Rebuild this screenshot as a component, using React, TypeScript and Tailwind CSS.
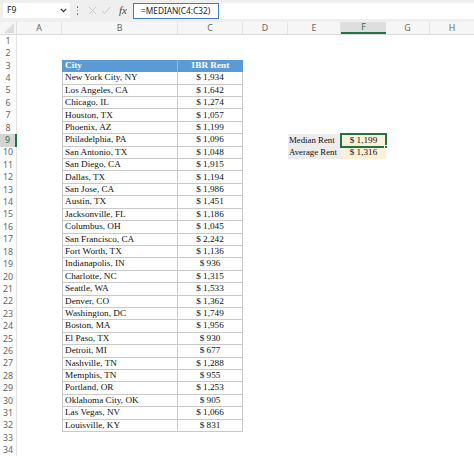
import React from "react";

const data: [string, string][] = [
  ["New York City, NY", "1,934"],
  ["Los Angeles, CA", "1,642"],
  ["Chicago, IL", "1,274"],
  ["Houston, TX", "1,057"],
  ["Phoenix, AZ", "1,199"],
  ["Philadelphia, PA", "1,096"],
  ["San Antonio, TX", "1,048"],
  ["San Diego, CA", "1,915"],
  ["Dallas, TX", "1,194"],
  ["San Jose, CA", "1,986"],
  ["Austin, TX", "1,451"],
  ["Jacksonville, FL", "1,186"],
  ["Columbus, OH", "1,045"],
  ["San Francisco, CA", "2,242"],
  ["Fort Worth, TX", "1,136"],
  ["Indianapolis, IN", "936"],
  ["Charlotte, NC", "1,315"],
  ["Seattle, WA", "1,533"],
  ["Denver, CO", "1,362"],
  ["Washington, DC", "1,749"],
  ["Boston, MA", "1,956"],
  ["El Paso, TX", "930"],
  ["Detroit, MI", "677"],
  ["Nashville, TN", "1,288"],
  ["Memphis, TN", "955"],
  ["Portland, OR", "1,253"],
  ["Oklahoma City, OK", "905"],
  ["Las Vegas, NV", "1,066"],
  ["Louisville, KY", "831"],
];

const serif = "font-['Liberation_Serif',serif]";

function Row({ n }: { n: number }) {
  const sel = n === 9;
  const inTable = n >= 3 && n <= 32;
  const head = n === 3;
  const item = n >= 4 && n <= 32 ? data[n - 4] : null;

  let bCls = "w-[116px] shrink-0 flex items-center pl-[2px]";
  let cCls = "w-[65px] shrink-0 flex items-center justify-center";
  if (head) {
    bCls += " bg-[#5b9bd5] border-l border-t border-b border-r border-[#5b9bd5] border-r-[#8fbbe4] text-white font-bold";
    cCls += " bg-[#5b9bd5] border-t border-b border-r border-[#5b9bd5] text-white font-bold";
  } else if (inTable) {
    bCls += " border-l border-b border-r border-[#c9c9c9] text-[#111]";
    cCls += " border-b border-r border-[#c9c9c9] text-[#111]";
  }

  return (
    <div className={`flex h-[12.42px] ${serif} text-[9.2px] leading-none`}>
      <div
        className={
          sel
            ? "w-[17px] shrink-0 flex items-center justify-center font-['Noto_Sans',sans-serif] text-[8.8px] bg-[#d4d4d4] text-[#217346] border-r-2 border-[#217346]"
            : "w-[17px] shrink-0 flex items-center justify-center font-['Noto_Sans',sans-serif] text-[8.8px] text-[#666] border-r border-[#e4e4e4]"
        }
      >
        {n}
      </div>
      <div className="w-[45px] shrink-0" />
      <div className={bCls}>{head ? "City" : item ? item[0] : ""}</div>
      <div className={cCls}>{head ? "1BR Rent" : item ? `$ ${item[1]}` : ""}</div>
      <div className="w-[45px] shrink-0" />
      {n === 9 || n === 10 ? (
        <div className="w-[53px] shrink-0 bg-[#ececec] flex items-center pl-[1px] text-[8.8px] text-[#111] whitespace-nowrap overflow-hidden">
          {n === 9 ? "Median Rent" : "Average Rent"}
        </div>
      ) : (
        <div className="w-[53px] shrink-0" />
      )}
      {n === 9 ? (
        <div className="w-[45px] shrink-0 bg-[#fdf0d4] flex items-center justify-center relative text-[#111]">
          $ 1,199
          <div className="absolute -inset-[1px] border-2 border-[#217346]" />
          <div className="absolute -right-[2px] -bottom-[2px] w-[4px] h-[4px] bg-[#217346] border border-white" />
        </div>
      ) : n === 10 ? (
        <div className="w-[45px] shrink-0 bg-[#fdf0d4] flex items-center justify-center text-[#111]">
          $ 1,316
        </div>
      ) : (
        <div className="w-[45px] shrink-0" />
      )}
      <div className="w-[44px] shrink-0" />
      <div className="flex-1" />
    </div>
  );
}

export default function App() {
  const rows = Array.from({ length: 34 }, (_, i) => i + 1);
  return (
    <div className="w-[474px] h-[456px] overflow-hidden bg-white font-['Noto_Sans',sans-serif]">
      {/* Formula bar */}
      <div className="flex h-[22px] bg-[#f0efef] items-start pt-[3px]">
        <div className="ml-[3px] w-[67px] h-[15px] bg-white flex items-center justify-between pl-[4px] pr-[3px]">
          <span className="text-[8.5px] text-[#222] leading-none">F9</span>
          <svg width="7" height="5" viewBox="0 0 7 5">
            <path d="M0.8 0.8 L3.5 3.6 L6.2 0.8" fill="none" stroke="#333" strokeWidth="1.2" />
          </svg>
        </div>
        <div className="w-[15px] h-[15px] flex flex-col items-center justify-center gap-[2px]">
          <div className="w-[1.6px] h-[1.6px] rounded-full bg-[#666]" />
          <div className="w-[1.6px] h-[1.6px] rounded-full bg-[#666]" />
          <div className="w-[1.6px] h-[1.6px] rounded-full bg-[#666]" />
        </div>
        <div className="w-[14px] h-[15px] flex items-center justify-center">
          <svg width="9" height="9" viewBox="0 0 9 9">
            <path d="M1 1 L8 8 M8 1 L1 8" stroke="#c4c4c4" strokeWidth="0.9" />
          </svg>
        </div>
        <div className="w-[14px] h-[15px] flex items-center justify-center">
          <svg width="10" height="9" viewBox="0 0 10 9">
            <path d="M1 4.8 L3.6 7.5 L9 1.2" fill="none" stroke="#c4c4c4" strokeWidth="0.9" />
          </svg>
        </div>
        <div className="w-[20px] h-[15px] flex items-center justify-center font-['Liberation_Serif',serif] italic text-[11px] text-[#444] leading-none">
          fx
        </div>
        <div className="flex-1 h-[16px] bg-white flex">
          <div className="w-[86px] h-[16px] border border-[#3e7bc4] flex items-center pl-[7px] text-[8.3px] text-[#222] leading-none">
            =MEDIAN(C4:C32)
          </div>
        </div>
      </div>
      {/* Column headers */}
      <div className="flex h-[13px] bg-[#f6f6f6] border-b border-[#d9d9d9] text-[8.8px] text-[#666] leading-none">
        <div className="w-[17px] shrink-0 flex items-end justify-end pr-[2px] pb-[1px] border-r border-[#e0e0e0]">
          <svg width="10" height="10" viewBox="0 0 10 10">
            <path d="M10 0 L10 10 L0 10 Z" fill="#dcdcdc" />
          </svg>
        </div>
        <div className="w-[45px] shrink-0 flex items-center justify-center border-r border-[#e3e3e3]">A</div>
        <div className="w-[116px] shrink-0 flex items-center justify-center border-r border-[#e3e3e3]">B</div>
        <div className="w-[65px] shrink-0 flex items-center justify-center border-r border-[#e3e3e3]">C</div>
        <div className="w-[45px] shrink-0 flex items-center justify-center border-r border-[#e3e3e3]">D</div>
        <div className="w-[53px] shrink-0 flex items-center justify-center border-r border-[#e3e3e3]">E</div>
        <div className="w-[45px] shrink-0 flex items-center justify-center bg-[#dedede] border-b-2 border-[#217346] text-[#217346]">F</div>
        <div className="w-[44px] shrink-0 flex items-center justify-center border-r border-[#e3e3e3]">G</div>
        <div className="flex-1 flex items-center justify-center">H</div>
      </div>
      {rows.map((n) => (
        <Row key={n} n={n} />
      ))}
    </div>
  );
}
